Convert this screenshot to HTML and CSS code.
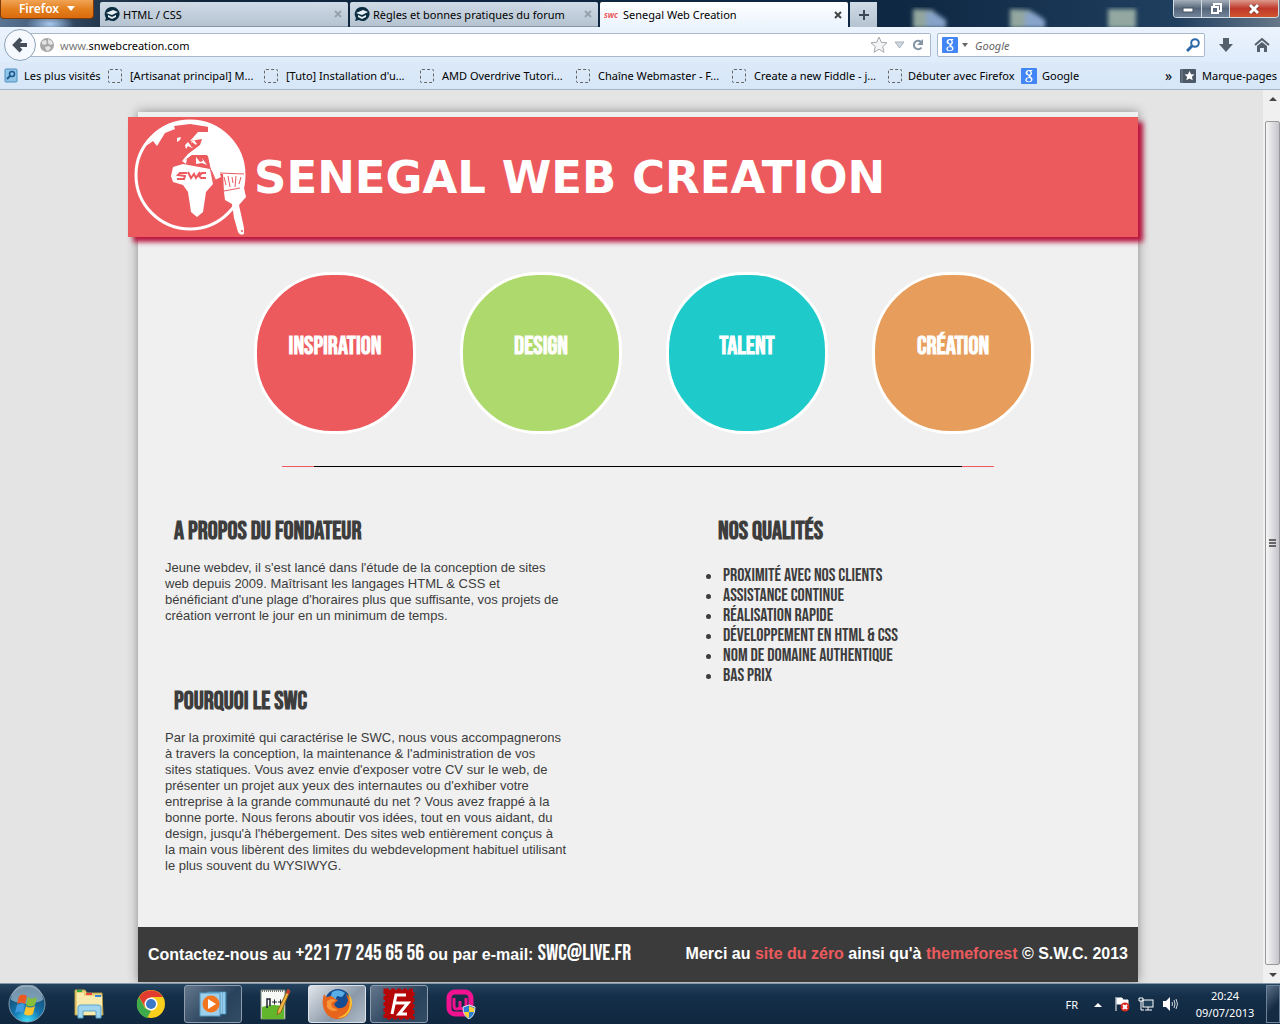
FILE: index.html
```html
<!DOCTYPE html>
<html lang="fr">
<head>
<meta charset="utf-8">
<title>Senegal Web Creation</title>
<link rel="stylesheet" href="styles.css">
</head>
<body>
<svg class="defs" aria-hidden="true">
  <symbol id="cap" viewBox="0 0 16 16"><path d="M8 1a7 7 0 1 1-3 13L1 15l1-3A7 7 0 0 1 8 1z" fill="#0b2d41"/><path d="M2 7l7-3 5 2-6 3zM4 9l4 2 4-2v2l-4 2-4-2z" fill="#e9f1f7"/></symbol>
  <symbol id="goog" viewBox="0 0 16 16"><rect width="16" height="16" rx="1" fill="#4285f4"/><path d="M11.500 2H8C3.500 2 3.600 7.500 7.500 7.300c-1 1 .5 1.500.8 2-5 0-5.300 5-.8 5 4.500 0 5-4 2.500-5.300-1-.7-1-1 0-1.800 1.600-1.200 1-3.400 0-4.200h1zM7.800 2.900c2 0 2.400 3.600.4 3.700-2 0-2.500-3.700-.4-3.700zM8 10c2.800.2 2.600 3.400-.2 3.400S5 10.200 8 10z" fill="#fff" fill-rule="evenodd"/></symbol>
</svg>

<header class="chrome">
  <div class="titlebar">
    <button class="firefox">Firefox <span class="caret"></span></button>
    <div class="tabs">
      <div class="tab"><svg width="16" height="16"><use href="#cap"/></svg><span>HTML / CSS</span><button aria-label="Fermer"><svg width="8" height="8"><path d="M1 1l6 6M7 1L1 7" stroke="currentColor" stroke-width="2"/></svg></button></div>
      <div class="tab"><svg width="16" height="16"><use href="#cap"/></svg><span>Règles et bonnes pratiques du forum</span><button aria-label="Fermer"><svg width="8" height="8"><path d="M1 1l6 6M7 1L1 7" stroke="currentColor" stroke-width="2"/></svg></button></div>
      <div class="tab active"><b class="favicon">swc</b><span>Senegal Web Creation</span><button aria-label="Fermer"><svg width="8" height="8"><path d="M1 1l6 6M7 1L1 7" stroke="currentColor" stroke-width="2"/></svg></button></div>
      <button class="newtab" aria-label="Nouvel onglet"><svg width="12" height="12"><path d="M6 1v10M1 6h10" stroke="#3d4854" stroke-width="2"/></svg></button>
    </div>
    <svg class="glass" height="27" aria-hidden="true">
      <filter id="soft"><feGaussianBlur stdDeviation="2"/></filter>
      <g filter="url(#soft)" opacity=".85">
        <path d="M36 9l20 1 12 18H36zM133 9l20 1 14 18h-34zM231 9h28v19h-28zM330 16h30v12h-30z" fill="#a9bcae"/>
        <path d="M49 12l8 0 12 8v8H49zM148 12l8 0 12 8v8h-20zM344 18h16l5 10h-21z" fill="#9bb8df"/>
      </g>
    </svg>
    <div class="winbtns">
      <button aria-label="Réduire"><svg width="12" height="8"><rect x="1" y="3" width="10" height="4" fill="#fff" stroke="#465363"/></svg></button>
      <button aria-label="Restaurer"><svg width="12" height="12"><path d="M4 3V1h7v7H9" fill="none" stroke="#fff" stroke-width="2"/><rect x="2" y="4" width="6" height="6" fill="none" stroke="#fff" stroke-width="2"/></svg></button>
      <button class="close" aria-label="Fermer la fenêtre"><svg width="12" height="10"><path d="M2 1l8 8M10 1L2 9" stroke="#5c2a24" stroke-width="4"/><path d="M2 1l8 8M10 1L2 9" stroke="#fff" stroke-width="3"/></svg></button>
    </div>
  </div>

  <div class="navbar">
    <button class="back" aria-label="Retour"><svg width="16" height="16"><path d="M9 2L3 8l6 6M3 8h12" fill="none" stroke="#454f5c" stroke-width="4"/></svg></button>
    <div class="urlbar">
      <svg width="14" height="14"><circle cx="7" cy="7" r="7" fill="#a6a6a6"/><path d="M2 3l4-1 1 3-2 2-3-1zM8 1l4 2 1 3-3 1-2-2zM5 9l4-1 2 2-3 3-2-1z" fill="#e3e3e3"/></svg>
      <span class="url"><i>www.</i>snwebcreation.com</span>
      <svg width="18" height="18"><path d="M9 1l2.300 5.300 5.700.5-4.300 3.800 1.300 5.700L9 13.300l-5 3 1.300-5.700L1 6.800l5.700-.5z" fill="#f5f5f5" stroke="#a4a9af"/></svg>
      <svg width="12" height="8"><path d="M1 1h9L5.500 7z" fill="#cfd7e1" stroke="#a9b2be"/></svg>
      <svg width="12" height="12"><path d="M9.500 8.500A4.200 4.200 0 1 1 9 3" fill="none" stroke="#8595a6" stroke-width="2"/><path d="M11 0v6H5z" fill="#8595a6"/></svg>
    </div>
    <form class="search">
      <svg width="16" height="16"><use href="#goog"/></svg><span class="caret dark"></span>
      <input type="text" placeholder="Google" aria-label="Recherche Google">
      <svg width="14" height="14"><circle cx="9" cy="5" r="3.800" fill="none" stroke="#2d69a8" stroke-width="2"/><path d="M6 8l-5 5" stroke="#2d69a8" stroke-width="3"/></svg>
    </form>
    <button class="tool" aria-label="Téléchargements"><svg width="16" height="16"><path d="M5 1h6v6h4l-7 8-7-8h4z" fill="#55606d"/></svg></button>
    <button class="tool" aria-label="Accueil"><svg width="16" height="16"><path d="M1 8l7-6 7 6" fill="none" stroke="#55606d" stroke-width="2"/><path d="M3 9l5-4 5 4v6h-3v-4H6v4H3z" fill="#55606d"/></svg></button>
  </div>

  <nav class="bookmarks">
    <a href="#" class="first"><svg width="14" height="15"><rect x="1" y="1" width="12" height="13" rx="1" fill="#8fc4e6" stroke="#4d91c0"/><circle cx="8" cy="6" r="2.500" fill="none" stroke="#1d588c" stroke-width="1.500"/><path d="M6 8l-3 3" stroke="#1d588c" stroke-width="2"/></svg>Les plus visités</a>
    <a href="#"><span class="blank"></span>[Artisanat principal] M...</a>
    <a href="#"><span class="blank"></span>[Tuto] Installation d'u...</a>
    <a href="#"><span class="blank"></span>AMD Overdrive Tutori...</a>
    <a href="#"><span class="blank"></span>Chaîne Webmaster - F...</a>
    <a href="#"><span class="blank"></span>Create a new Fiddle - j...</a>
    <a href="#" class="start"><span class="blank"></span>Débuter avec Firefox</a>
    <a href="#" class="last"><svg width="16" height="16"><use href="#goog"/></svg>Google</a>
    <span class="more">»</span>
    <a href="#" class="menu"><svg width="16" height="14"><rect width="16" height="14" rx="1" fill="#4d5866"/><path d="M2 0v14" stroke="#7b8796"/><path d="M9.500 2l1.500 3.200 3.500.3-2.600 2.300.8 3.500-3.200-1.800-3.200 1.800.8-3.500-2.600-2.300 3.500-.3z" fill="#fff"/></svg>Marque-pages</a>
  </nav>
</header>

<div class="viewport">
  <div class="site">
    <div class="page">
      <header class="banner">
        <svg class="logo" width="120" height="120" viewBox="0 0 120 120" aria-hidden="true">
          <circle cx="62" cy="58" r="54" fill="none" stroke="#fff" stroke-width="3"/>
          <path d="M18 29C30 12 44 4 62 3Q74 3 81 7V10L62 7 46 9 47 12 37 16 29 29 25 24z" fill="#fff"/>
          <path d="M80 7C102 16 116 34 117 57H92L93 60 87 63 82 50 79 38H64L57 43 54 44 60 37 72 28 74 22 62 24 70 15H80z" fill="#fff"/>
          <path d="M49 21l4-1-1 3-3 2zM57 28l3-3 3 4 2-1-2-3 3-2 3 4-5 4-4-2-2 3z" fill="#fff"/>
          <path d="M64 25l4 3 2-2 2 1-5 4-4-1M62 39l7-1 3 2 8-1 2 10 1 4-28-6 7-3z" fill="#ec5a5e"/>
          <path d="M68 40l4 5 3-1-1-3 5 7-5-2-6 1zM54 44l5-2-1 5z" fill="#fff"/>
          <path d="M45 50l10-3 27 5 3 15-7 8-3 20-6 5-6-5-3-20-5-7-10-3-2-6z" fill="#fff"/>
          <path d="M59 56h-7l-2 2 7 1-1 3h-7M60 55l3 6 3-4 2 4 4-6M78 56h-4l-3 3 2 2h5" fill="none" stroke="#ec5a5e" stroke-width="2"/>
          <path d="M95 57h20l1 14 2 9-7 8 5 23v6q-4 2-6-2l-4-14-2-14-7-4-1-8z" fill="#fff"/>
          <path d="M83 53l5 11M92 56l24 1M96 60l2 8M100 59l2 11M104 60l1 6M108 59l-1 11M113 60l-2 7M96 74l16-3" fill="none" stroke="#ec5a5e"/>
          <circle cx="114" cy="114" r="1" fill="#ec5a5e"/>
        </svg>
        <h1>SENEGAL WEB CREATION</h1>
      </header>
      <ul class="circles">
        <li class="red">INSPIRATION</li>
        <li class="green">DESIGN</li>
        <li class="teal">TALENT</li>
        <li class="orange">CRÉATION</li>
      </ul>
      <hr class="rule">
      <main class="columns">
        <div class="about">
          <section>
            <h2>A PROPOS DU FONDATEUR</h2>
            <p>Jeune webdev, il s'est lancé dans l'étude de la conception de sites web depuis 2009. Maîtrisant les langages HTML &amp; CSS et<br>bénéficiant d'une plage d'horaires plus que suffisante, vos projets de création verront le jour en un minimum de temps.</p>
          </section>
          <section>
            <h2>POURQUOI LE SWC</h2>
            <p>Par la proximité qui caractérise le SWC, nous vous accompagnerons à travers la conception, la maintenance &amp; l'administration de vos<br>sites statiques. Vous avez envie d'exposer votre CV sur le web, de présenter un projet aux yeux des internautes ou d'exhiber votre entreprise à la grande communauté du net ? Vous avez frappé à la bonne porte. Nous ferons aboutir vos idées, tout en vous aidant, du design, jusqu'à l'hébergement. Des sites web entièrement conçus à<br>la main vous libèrent des limites du webdevelopment habituel utilisant<br>le plus souvent du WYSIWYG.</p>
          </section>
        </div>
        <section class="qualities">
          <h2>NOS QUALITÉS</h2>
          <ul>
            <li>PROXIMITÉ AVEC NOS CLIENTS</li>
            <li>ASSISTANCE CONTINUE</li>
            <li>RÉALISATION RAPIDE</li>
            <li>DÉVELOPPEMENT EN HTML &amp; CSS</li>
            <li>NOM DE DOMAINE AUTHENTIQUE</li>
            <li>BAS PRIX</li>
          </ul>
        </section>
      </main>
      <footer class="footer">
        <p>Contactez-nous au <span>+221 77 245 65 56</span> ou par e-mail: <span>SWC@LIVE.FR</span></p>
        <p>Merci au <a href="#">site du zéro</a> ainsi qu'à <a href="#">themeforest</a> © S.W.C. 2013</p>
      </footer>
    </div>
  </div>
  <div class="scrollbar" aria-hidden="true">
    <svg width="15" height="31"><path d="M4 11l4-4 4 4z" fill="#444"/></svg>
    <div class="thumb"><i></i><i></i><i></i></div>
    <svg width="15" height="18"><path d="M4 8h8l-4 4z" fill="#444"/></svg>
  </div>
</div>

<footer class="taskbar">
  <button class="orb" aria-label="Démarrer"><svg width="38" height="38" viewBox="0 0 38 38"><defs><radialGradient id="o" cx=".5" cy="1" r=".9"><stop offset="0" stop-color="#3ee4ff"/><stop offset=".45" stop-color="#1578b0"/><stop offset="1" stop-color="#174468"/></radialGradient></defs><circle cx="19" cy="19" r="18" fill="url(#o)" stroke="#809bb0"/><path d="M3 15a16 16 0 0 1 32 0c-10 5-22 5-32 0z" fill="#b9ccd8" opacity=".6"/><path d="M11 11q4-3 8 0l-2 8q-4-3-8 0z" fill="#ea5a24"/><path d="M20 12q4 3 9 0l-2 8q-4 3-9 0z" fill="#88bf3a"/><path d="M9 20q4-3 8 0l-2 8q-4-3-8 0z" fill="#3f9be0"/><path d="M18 21q4 3 9 0l-2 8q-4 3-9 0z" fill="#fcc32d"/></svg></button>
  <div class="apps">
    <button aria-label="Explorateur"><svg width="34" height="32" viewBox="0 0 34 32"><path d="M3 2h10l2 3h15l1 22H3z" fill="#e9d27a" stroke="#bb9d46"/><path d="M5 5h7v3h18v19H5z" fill="#f9ebae"/><path d="M5 3h5" stroke="#3a4" stroke-width="2"/><path d="M14 6h6" stroke="#e44" stroke-width="2"/><path d="M23 8h6" stroke="#38d" stroke-width="2"/><path d="M6 30V19q0-2 3-2h17q3 0 3 2v11h-5v-7H11v7z" fill="#9fd5ee" stroke="#5ba3cb"/></svg></button>
    <button aria-label="Chrome"><svg width="30" height="30" viewBox="0 0 30 30"><circle cx="15" cy="15" r="14" fill="#f9cf1d"/><path d="M15 15L9 18 3 8a14 14 0 0 1 24 0H15z" fill="#e23c30"/><path d="M3 8l6 11 6 3-4 7A14 14 0 0 1 3 8z" fill="#3faa4b"/><circle cx="15" cy="15" r="6.500" fill="#fff"/><circle cx="15" cy="15" r="5" fill="#3d78c8"/></svg></button>
    <button class="open" aria-label="Lecteur multimédia"><svg width="28" height="26" viewBox="0 0 28 26"><path d="M8 1h19v22H8z" fill="#74b6dc" stroke="#3f86b4"/><path d="M22 1v22M25 1v22" stroke="#b4ddf2"/><rect x="1" y="2" width="20" height="23" fill="#9ed0ec" stroke="#5797c0"/><circle cx="12" cy="13" r="8.500" fill="#f2761f"/><path d="M9 8l8 5-8 5z" fill="#fff"/></svg></button>
    <button aria-label="Notepad++"><svg width="32" height="32" viewBox="0 0 32 32"><path d="M2 2h24v29H2z" fill="#f7f9f7" stroke="#7d8c7d"/><path d="M3 19q12-4 22 0v12H3z" fill="#61b62c"/><path d="M3 3h22" stroke="#777" stroke-width="2" stroke-dasharray="1 1"/><path d="M8 20v-9h3v7" fill="none" stroke="#223" stroke-width="1.500"/><path d="M13 14h5M15.500 11.500v5M19 14h5M21.500 11.500v5" stroke="#223"/><path d="M29 1l2 2-9 21-4 3 1-5z" fill="#f0b740" stroke="#8d6425"/><path d="M29 1l2 2-1 3-3-1z" fill="#c33"/></svg></button>
    <button class="open active" aria-label="Firefox"><svg width="32" height="32" viewBox="0 0 32 32"><circle cx="17" cy="14" r="13" fill="#174c91"/><path d="M11 4q7-4 13 1l-3 4-5-1-2 5-5-2z" fill="#58aee6"/><path d="M3 6q1 3 3 3l4-1q3 1 4 3l3 1-4 4q2 5 7 4 6-1 7-8l-2-6q8 6 5 15-4 10-14 10C4 30-1 18 3 6z" fill="#e6641b"/><path d="M27 5q6 7 3 15-3 10-14 10 10-3 12-10 2-8-1-15z" fill="#fbc331"/><path d="M6 13l4-2 5 1-5 3 1 4 6 3q-7 3-11-3z" fill="#f9973a"/></svg></button>
    <button class="open" aria-label="FileZilla"><svg width="32" height="32" viewBox="0 0 32 32"><rect x="2" y="2" width="28" height="28" fill="#b50707" stroke="#b50707" stroke-width="3" stroke-dasharray="4 2"/><path d="M9 26l4-19h10M11 15h9M17 15h8l-9 11h8" fill="none" stroke="#fff" stroke-width="3"/></svg></button>
    <button aria-label="WampServer"><svg width="30" height="30" viewBox="0 0 30 30"><rect x="3" y="3" width="22" height="22" rx="6" fill="none" stroke="#f0128f" stroke-width="5"/><path d="M8 9v8q0 3 3 3t3-3v-5M14 17q0 3 3 3t3-3V9" fill="none" stroke="#f0128f" stroke-width="3"/><path d="M17 18l6-2 6 2q0 9-6 12-6-3-6-12z" fill="#2c7fd4" stroke="#dce7f0"/><path d="M23 17l5 2v4h-5zM18 23h5v6q-4-2-5-6z" fill="#fbd030"/></svg></button>
  </div>
  <div class="tray">
    <span class="lang">FR</span>
    <svg class="expand" width="8" height="5"><path d="M0 5l4-4 4 4z" fill="#fff"/></svg>
    <svg width="16" height="16"><path d="M2 1v14M3 2h5l1 2h5v6H9L8 8H3z" fill="#fff" stroke="#fff"/><circle cx="11" cy="11" r="4.500" fill="#d8261c"/><path d="M9 9l4 4M13 9l-4 4" stroke="#fff" stroke-width="2"/></svg>
    <svg width="16" height="16"><rect x="5" y="4" width="10" height="7" fill="#23405a" stroke="#fff"/><path d="M7 14h7M10 11v3M1 2v3h4V2M3 5v9h3M2 1v2M4 1v2" fill="none" stroke="#fff"/></svg>
    <svg width="16" height="16"><path d="M1 5h3l4-4v14l-4-4H1z" fill="#fff"/><path d="M10 6q1 2 0 4M12 4q2 4 0 8M14 3q3 5 0 10" fill="none" stroke="#d5dde4"/></svg>
    <time class="clock">20:24<br>09/07/2013</time>
    <button class="desktop" aria-label="Afficher le bureau"></button>
  </div>
</footer>
</body>
</html>
```
FILE: styles.css
```css
* { box-sizing: border-box; }
body { margin: 0; min-height: 100vh; display: flex; flex-direction: column; background: #e4e4e4; font-family: "Noto Sans", "Open Sans", sans-serif; font-size: 11px; color: #000; }
button { margin: 0; padding: 0; border: 0; background: none; font: inherit; color: inherit; display: flex; align-items: center; justify-content: center; }
ul { margin: 0; padding: 0; list-style: none; }
svg { flex: none; display: block; }
a { color: inherit; text-decoration: none; }
.defs { position: absolute; width: 0; height: 0; }

/* Browser window */
.titlebar { display: flex; align-items: flex-start; height: 27px; overflow: hidden; background: radial-gradient(ellipse 24px 10px at 50px 24px, #a8c8ee, transparent), linear-gradient(90deg, #5a7694, #24384f 96px, #10243d 200px, #0e2742 70%, #203f5f 92%, #66788a); }
.firefox { width: 94px; height: 19px; gap: 8px; padding-bottom: 2px; color: #fff; font-weight: 600; font-size: 12px; border: 1px solid #7c3a08; border-top: 0; border-radius: 0 0 4px 4px; background: linear-gradient(#f0a455, #e47f1e 50%, #d96b0e); }
.caret { border: 4px solid transparent; border-top: 5px solid #fff; border-bottom: 0; }
.caret.dark { border-width: 4px 3px 0; border-top-color: #666; }
.tabs { display: flex; gap: 2px; margin-left: 6px; padding-top: 2px; }
.tab { display: flex; align-items: center; gap: 3px; width: 248px; height: 25px; padding: 0 6px 0 4px; white-space: nowrap; background: linear-gradient(#cfdbe7, #b5c3d0); border-bottom: 1px solid #8796a7; border-radius: 2px 2px 0 0; }
.tab span { flex: 1; }
.tab button { color: #98a2ac; }
.tab.active { background: linear-gradient(#fff, #ebf3fd); border-bottom: 0; }
.tab.active button { color: #444; }
.favicon { width: 16px; font-size: 8px; font-style: italic; color: #ec5a5e; }
.newtab { width: 27px; height: 25px; background: linear-gradient(#cfdbe7, #b5c3d0); }
.glass { flex: 1; width: 0; min-width: 0; }
.winbtns { display: flex; height: 18px; margin-right: 1px; border: 1px solid #d3dbe3; border-top: 0; border-radius: 0 0 4px 4px; overflow: hidden; }
.winbtns button { width: 28px; border-right: 1px solid #d3dbe3; background: linear-gradient(#a5b0bb, #56667a 50%, #71839a); }
.winbtns .close { width: 48px; border: 0; background: linear-gradient(#dc9a8c, #c0392a 50%, #d0542f); }
.navbar { display: flex; align-items: center; height: 35px; padding: 1px 9px 0 4px; background: linear-gradient(#ebf3fd, #dfecfa); }
.back { width: 32px; height: 32px; border: 1px solid #8ea2b8; border-radius: 50%; background: #f6faff; position: relative; }
.urlbar { flex: 1; display: flex; align-items: center; gap: 6px; height: 24px; margin-left: -6px; padding: 0 6px 0 10px; background: #fff; border: 1px solid #a9b9cd; border-left: 0; border-radius: 0 2px 2px 0; }
.url { flex: 1; }
.url i { font-style: normal; color: #777; }
.search { display: flex; align-items: center; gap: 4px; width: 268px; height: 24px; margin: 0 12px 0 6px; padding: 0 4px; background: #fff; border: 1px solid #a9b9cd; border-radius: 2px; }
.search input { flex: 1; min-width: 0; border: 0; padding: 0 0 0 3px; background: none; outline: 0; font: italic 11px "Noto Sans", sans-serif; }
.search input::placeholder { color: #666; opacity: 1; }
.tool { width: 18px; height: 18px; }
.tool + .tool { margin-left: 18px; }
.bookmarks { display: flex; align-items: center; height: 28px; padding: 0 3px 0 4px; background: linear-gradient(#dce9f8, #d7e7f8); border-bottom: 1px solid #a2b4c8; white-space: nowrap; }
.bookmarks a { display: flex; align-items: center; gap: 8px; width: 156px; }
.bookmarks .first { width: 104px; gap: 6px; }
.bookmarks .start { width: 133px; gap: 6px; }
.bookmarks .last { width: auto; gap: 5px; }
.bookmarks .menu { width: auto; gap: 6px; }
.blank { flex: none; width: 14px; height: 14px; border: 1px dashed #666; border-radius: 2px; }
.more { margin: 0 8px 0 auto; font-size: 14px; }

/* Web page */
.viewport { flex: 1; display: flex; background: #e4e4e4; }
.site { flex: 1; padding: 22px 0 1px 13px; }
.page { max-width: 1000px; margin: 0 auto; padding-top: 5px; background: #f0f0f0; box-shadow: 0 0 10px #888; color: #3d3d3d; }
.banner { display: flex; align-items: center; gap: 6px; height: 120px; margin-left: -10px; background: #ec5a5e; box-shadow: 5px 5px 5px #b9123c; color: #fff; }
.banner h1 { margin: 0; font: bold 45px "DejaVu Sans", sans-serif; white-space: nowrap; }
.circles, h2, .qualities ul, .footer span { font-family: "Bebas Neue", "Roboto Condensed", "Liberation Sans Narrow", "Liberation Sans", sans-serif; }
.circles { display: flex; justify-content: center; gap: 44px; padding: 35px 0 32px 12px; }
.circles li { display: flex; align-items: center; justify-content: center; width: 162px; height: 162px; padding-bottom: 14px; border: 3px solid #fff; border-radius: 78px; color: #fff; font-size: 25px; font-weight: bold; }
.red { background: #ec5a5e; }
.green { background: #aed96c; }
.teal { background: #1fcaca; }
.orange { background: #e79e5c; }
.rule { width: 712px; height: 1px; margin: 0 144px; border: 0; background: linear-gradient(90deg, #ec5a5e 32px, #000 32px, #000 680px, #ec5a5e 680px); }
.columns { display: flex; justify-content: space-between; padding: 51px 27px 53px; }
.about { width: 404px; }
h2 { margin: 0 0 14px; padding-left: 9px; font-size: 25px; line-height: 28px; font-weight: bold; white-space: nowrap; }
.about p { margin: 0; font: 13px/16px "Liberation Sans", Arial, sans-serif; }
.about section + section { margin-top: 64px; }
.qualities { width: 402px; }
.qualities h2 { margin-bottom: 20px; }
.qualities ul { padding-left: 14px; list-style: disc; font-size: 18px; line-height: 20px; }
.footer { display: flex; justify-content: space-between; height: 55px; padding: 17px 10px 0; background: #3b3b3b; color: #fff; font: bold 16px/20px "Liberation Sans", Arial, sans-serif; white-space: nowrap; }
.footer p { margin: 0; }
.footer span { font-size: 22px; font-weight: normal; }
.footer a { color: #ec5a5e; }

.scrollbar { display: flex; flex-direction: column; width: 17px; padding-left: 2px; background: #f0f0f0; }
.thumb { flex: 1; display: flex; flex-direction: column; align-items: center; justify-content: center; gap: 1px; border: 1px solid #999; border-radius: 2px; background: linear-gradient(90deg, #f6f6f6, #dedee2 50%, #c4c4cc); }
.thumb i { width: 7px; height: 2px; background: #666; }

/* Desktop taskbar */
.taskbar { display: flex; align-items: center; height: 41px; border-top: 1px solid #8498ab; background: linear-gradient(#24435f, #152f49 30%, #10273f); color: #fff; }
.orb { margin: 0 14px 0 8px; }
.apps { display: flex; gap: 4px; }
.apps button { width: 58px; height: 38px; border-radius: 3px; }
.apps .open { border: 1px solid #8e9cab; background: linear-gradient(135deg, #63778c, #2a435d 60%, #324c66); }
.apps .active { background: linear-gradient(135deg, #e0e5ea, #8a98a8 60%, #b0bcc8); border-color: #dde3e9; }
.tray { display: flex; align-items: center; gap: 8px; margin-left: auto; height: 100%; }
.lang { margin-right: 8px; }
.expand { margin-right: 4px; }
.clock { width: 66px; margin-left: 6px; text-align: center; line-height: 17px; }
.desktop { width: 14px; height: 38px; border: 1px solid #6d8298; background: linear-gradient(135deg, #5b7188, #142b43 60%); }
```
